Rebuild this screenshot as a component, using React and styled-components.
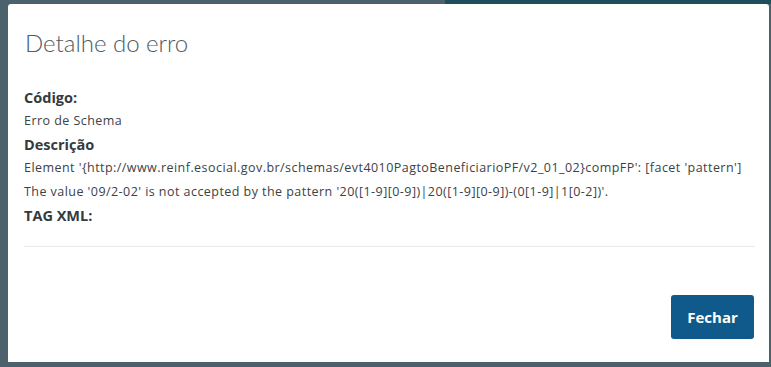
import React from 'react'
import styled, { createGlobalStyle } from 'styled-components'

const GlobalStyle = createGlobalStyle`
  html, body {
    margin: 0;
    padding: 0;
    height: 100%;
  }
  body {
    font-family: Lato, "Open Sans", sans-serif;
    background: #4b616b;
  }
`

const Backdrop = styled.div`
  width: 771px;
  height: 367px;
  box-sizing: border-box;
  padding: 4px 2px 5px 8px;
  background: linear-gradient(to right, #4b616b 0, #4b616b 445px, #1d4e5c 445px);
  background-size: 100% 4px;
  background-repeat: no-repeat;
  background-color: #4b616b;
`

const Modal = styled.div`
  height: 100%;
  background: #fff;
  border-radius: 3px 3px 0 0;
  display: flex;
  flex-direction: column;
  box-sizing: border-box;
`

const Header = styled.header`
  padding: 24px 16px 0 17px;
  height: 60px;
  box-sizing: border-box;
`

const Title = styled.h2`
  margin: 0;
  font-size: 24px;
  font-weight: 300;
  color: #4c5b63;
  line-height: 30px;
`

const Body = styled.div`
  margin: 22px 14px 0 16px;
  padding-bottom: 19px;
  border-bottom: 1px solid #e9ecee;
`

const Label = styled.div`
  font-family: "Open Sans", sans-serif;
  font-size: 14.5px;
  font-weight: 700;
  color: #333b40;
  line-height: 23px;
`

const Text = styled.div`
  font-family: "Open Sans", sans-serif;
  font-size: 12.5px;
  letter-spacing: 0.45px;
  color: #3c4246;
  line-height: 24px;
  white-space: nowrap;
`

const Footer = styled.footer`
  display: flex;
  justify-content: flex-end;
  padding: 48px 15px 0 0;
`

const Button = styled.button`
  width: 83px;
  height: 44px;
  border: none;
  border-radius: 3px;
  background: #0f5a8b;
  color: #fff;
  font-family: "Open Sans", sans-serif;
  font-size: 15px;
  font-weight: 700;
  cursor: pointer;
`

export default function App() {
  return (
    <>
      <GlobalStyle />
      <Backdrop>
        <Modal>
          <Header>
            <Title>Detalhe do erro</Title>
          </Header>
          <Body>
            <Label>Código:</Label>
            <Text>Erro de Schema</Text>
            <Label>Descrição</Label>
            <Text>
              Element '{'{'}http://www.reinf.esocial.gov.br/schemas/evt4010PagtoBeneficiarioPF/v2_01_02{'}'}compFP': [facet 'pattern']
            </Text>
            <Text>
              The value '09/2-02' is not accepted by the pattern '20([1-9][0-9])|20([1-9][0-9])-(0[1-9]|1[0-2])'.
            </Text>
            <Label>TAG XML:</Label>
          </Body>
          <Footer>
            <Button>Fechar</Button>
          </Footer>
        </Modal>
      </Backdrop>
    </>
  )
}
